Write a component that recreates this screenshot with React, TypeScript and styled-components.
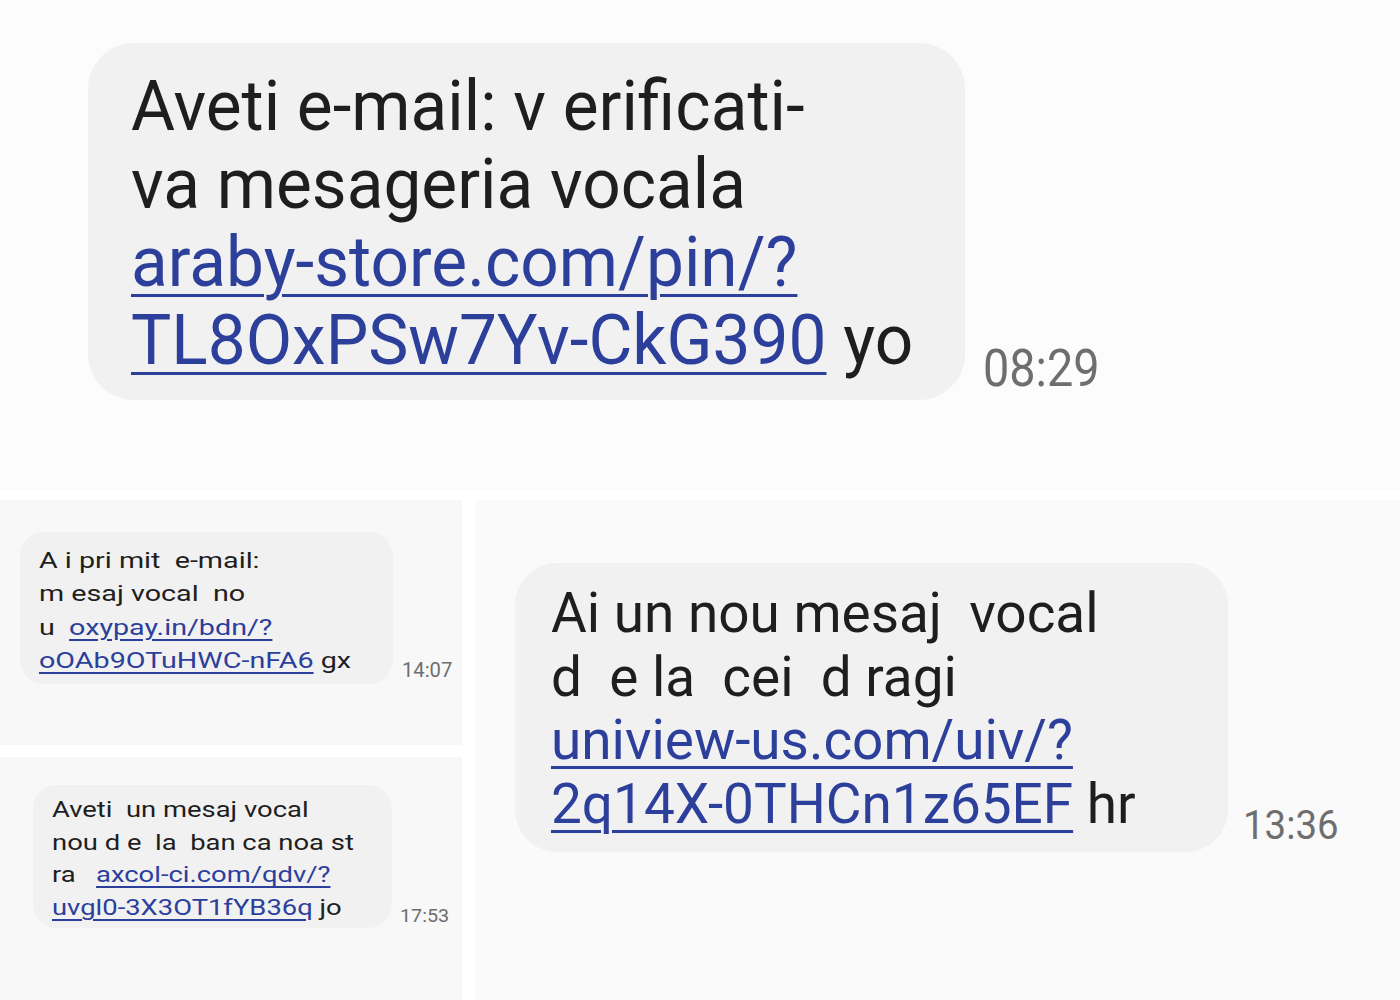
import React from 'react';
import styled, { createGlobalStyle } from 'styled-components';

const GlobalStyle = createGlobalStyle`
  html, body {
    margin: 0;
    padding: 0;
    background: #ffffff;
  }
  body {
    font-family: Roboto, 'Noto Sans', 'Liberation Sans', sans-serif;
    color: #1f1f1f;
  }
`;

// collage of four message screenshots
const Page = styled.div`
  width: 1400px;
  height: 1000px;
  display: grid;
  grid-template-rows: 490px 500px;
  row-gap: 10px;
  overflow: hidden;
`;

const BottomRow = styled.div`
  display: grid;
  grid-template-columns: 462px 925px;
  column-gap: 13px;
`;

const LeftColumn = styled.div`
  display: grid;
  grid-template-rows: 245px 243px;
  row-gap: 12px;
`;

const Panel = styled.div<{ $bg: string; $pad: string }>`
  background: ${(p) => p.$bg};
  padding: ${(p) => p.$pad};
  display: flex;
  align-items: flex-start;
  box-sizing: border-box;
`;

const Row = styled.div<{ $gap: number }>`
  display: flex;
  align-items: flex-end;
  gap: ${(p) => p.$gap}px;
`;

const Bubble = styled.div<{ $w: number; $h: number; $r: number; $pad: string }>`
  width: ${(p) => p.$w}px;
  height: ${(p) => p.$h}px;
  border-radius: ${(p) => p.$r}px;
  padding: ${(p) => p.$pad};
  background: #f1f1f1;
  box-sizing: border-box;
  overflow: hidden;
`;

// screenshots were resized unevenly, so the text is stretched per panel
const Body = styled.div<{ $size: number; $lh: number; $sx: number }>`
  font-size: ${(p) => p.$size}px;
  line-height: ${(p) => p.$lh}px;
  transform: scaleX(${(p) => p.$sx});
  transform-origin: left top;
  white-space: pre;
  color: #1e1e1e;
`;

const Line = styled.div``;

const Link = styled.span<{ $thick: number; $offset: number }>`
  color: #2c3f9b;
  text-decoration: underline;
  text-decoration-thickness: ${(p) => p.$thick}px;
  text-underline-offset: ${(p) => p.$offset}px;
`;

const Time = styled.div<{ $size: number; $sx: number; $mb: number }>`
  font-size: ${(p) => p.$size}px;
  line-height: 1;
  color: #6e6e6e;
  margin-bottom: ${(p) => p.$mb}px;
  transform: scaleX(${(p) => p.$sx});
  transform-origin: left bottom;
  white-space: nowrap;
`;

const App: React.FC = () => {
  return (
    <>
      <GlobalStyle />
      <Page>
        <Panel $bg="#fcfcfc" $pad="43px 0 0 88px">
          <Row $gap={18}>
            <Bubble $w={877} $h={357} $r={46} $pad="24px 0 0 43px">
              <Body $size={70} $lh={78} $sx={0.965}>
                <Line>Aveti e-mail: v erificati-</Line>
                <Line>va mesageria vocala</Line>
                <Line>
                  <Link $thick={3} $offset={8}>araby-store.com/pin/?</Link>
                </Line>
                <Line>
                  <Link $thick={3} $offset={8}>TL8OxPSw7Yv-CkG390</Link> yo
                </Line>
              </Body>
            </Bubble>
            <Time $size={52} $sx={0.9} $mb={5}>08:29</Time>
          </Row>
        </Panel>
        <BottomRow>
          <LeftColumn>
            <Panel $bg="#f8f8f8" $pad="32px 0 0 20px">
              <Row $gap={9}>
                <Bubble $w={373} $h={152} $r={24} $pad="12px 0 0 19px">
                  <Body $size={22} $lh={33.4} $sx={1.305}>
                    <Line>A i pri mit  e-mail:</Line>
                    <Line>m esaj vocal  no</Line>
                    <Line>
                      u  <Link $thick={1.5} $offset={4}>oxypay.in/bdn/?</Link>
                    </Line>
                    <Line>
                      <Link $thick={1.5} $offset={4}>oOAb9OTuHWC-nFA6</Link> gx
                    </Line>
                  </Body>
                </Bubble>
                <Time $size={20} $sx={1.01} $mb={4}>14:07</Time>
              </Row>
            </Panel>
            <Panel $bg="#f8f8f8" $pad="28px 0 0 33px">
              <Row $gap={8}>
                <Bubble $w={359} $h={143} $r={24} $pad="9px 0 0 19px">
                  <Body $size={22} $lh={32.5} $sx={1.245}>
                    <Line>Aveti  un mesaj vocal</Line>
                    <Line>nou d e  la  ban ca noa st</Line>
                    <Line>
                      ra   <Link $thick={1.5} $offset={4}>axcol-ci.com/qdv/?</Link>
                    </Line>
                    <Line>
                      <Link $thick={1.5} $offset={4}>uvgl0-3X3OT1fYB36q</Link> jo
                    </Line>
                  </Body>
                </Bubble>
                <Time $size={19} $sx={1.04} $mb={3}>17:53</Time>
              </Row>
            </Panel>
          </LeftColumn>
          <Panel $bg="#fafafa" $pad="63px 0 0 40px">
            <Row $gap={15}>
              <Bubble $w={713} $h={289} $r={42} $pad="19px 0 0 36px">
                <Body $size={56} $lh={63.5} $sx={0.98}>
                  <Line>Ai un nou mesaj  vocal</Line>
                  <Line>d  e la  cei  d ragi</Line>
                  <Line>
                    <Link $thick={2.5} $offset={7}>uniview-us.com/uiv/?</Link>
                  </Line>
                  <Line>
                    <Link $thick={2.5} $offset={7}>2q14X-0THCn1z65EF</Link> hr
                  </Line>
                </Body>
              </Bubble>
              <Time $size={40} $sx={0.96} $mb={6}>13:36</Time>
            </Row>
          </Panel>
        </BottomRow>
      </Page>
    </>
  );
};

export default App;
